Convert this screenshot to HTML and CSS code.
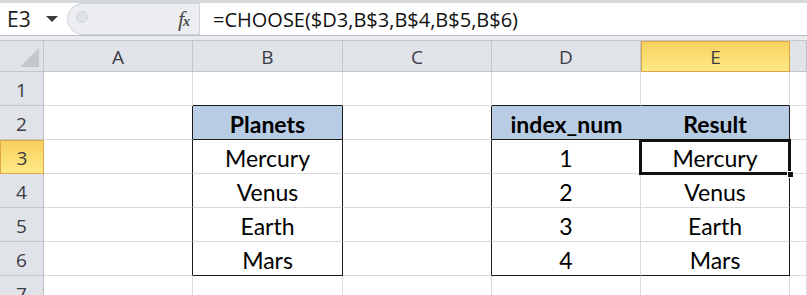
FILE: index.html
```html
<!DOCTYPE html>
<html>
<head>
<meta charset="utf-8">
<link rel="stylesheet" href="styles.css">
</head>
<body>
<div class="fbar">
  <div class="fbar-row">
    <div class="namebox"><span>E3</span><span class="dd"></span></div>
    <div class="splitter">
      <span class="knob"></span>
      <span class="fx"><i>f</i><i class="x">x</i></span>
    </div>
    <div class="formula">=CHOOSE($D3,B$3,B$4,B$5,B$6)</div>
  </div>
</div>
<div class="sheet">
  <div class="ch corner"><span class="tri"></span></div>
  <div class="ch">A</div>
  <div class="ch">B</div>
  <div class="ch">C</div>
  <div class="ch">D</div>
  <div class="ch sel">E</div>
  <div class="ch"></div>

  <div class="rh">1</div>
  <div class="c"></div>
  <div class="c kb"></div>
  <div class="c"></div>
  <div class="c kb"></div>
  <div class="c kb"></div>
  <div class="c"></div>

  <div class="rh">2</div>
  <div class="c kr"></div>
  <div class="c hd kr kb">Planets</div>
  <div class="c kr"></div>
  <div class="c hd kb nr">index_num</div>
  <div class="c hd kr kb">Result</div>
  <div class="c"></div>

  <div class="rh rsel">3</div>
  <div class="c kr"></div>
  <div class="c kr">Mercury</div>
  <div class="c kr"></div>
  <div class="c">1</div>
  <div class="c kr active">Mercury</div>
  <div class="c"></div>

  <div class="rh">4</div>
  <div class="c kr"></div>
  <div class="c kr">Venus</div>
  <div class="c kr"></div>
  <div class="c">2</div>
  <div class="c kr">Venus</div>
  <div class="c"></div>

  <div class="rh">5</div>
  <div class="c kr"></div>
  <div class="c kr">Earth</div>
  <div class="c kr"></div>
  <div class="c">3</div>
  <div class="c kr">Earth</div>
  <div class="c"></div>

  <div class="rh">6</div>
  <div class="c kr"></div>
  <div class="c kr kb">Mars</div>
  <div class="c kr"></div>
  <div class="c kb">4</div>
  <div class="c kr kb">Mars</div>
  <div class="c"></div>

  <div class="rh">7</div>
  <div class="c"></div>
  <div class="c"></div>
  <div class="c"></div>
  <div class="c"></div>
  <div class="c"></div>
  <div class="c"></div>
</div>
</body>
</html>
```
FILE: styles.css
```css
html, body {
  margin: 0;
  padding: 0;
  background: #ffffff;
  overflow: hidden;
}
body {
  width: 807px;
  height: 295px;
  font-family: "Lato", "Liberation Sans", sans-serif;
}

/* formula bar */
.fbar {
  height: 41px;
  box-sizing: border-box;
  background: #e9ebee;
  border-top: 3px solid #d5d8dc;
  border-bottom: 1px solid #c3c6ca;
}
.fbar-row {
  display: flex;
  height: 32px;
  border-bottom: 1px solid #b9bcc0;
  background: #ffffff;
}
.namebox {
  width: 67px;
  box-sizing: border-box;
  display: flex;
  align-items: center;
  padding-left: 7px;
  font-family: "Open Sans", "Liberation Sans", sans-serif;
  font-size: 21px;
  color: #1e1e1e;
}
.dd {
  width: 0;
  height: 0;
  margin-left: 15px;
  border-left: 6px solid transparent;
  border-right: 6px solid transparent;
  border-top: 6px solid #3a3a3a;
}
.splitter {
  width: 133px;
  box-sizing: border-box;
  background: #eceef1;
  border: 1px solid #cfd2d6;
  border-radius: 16px 0 0 16px;
  display: flex;
  align-items: center;
  justify-content: space-between;
  padding: 0 10px 0 8px;
}
.knob {
  width: 10px;
  height: 10px;
  border-radius: 50%;
  background: #dfe2e6;
  border: 1px solid #d2d5d9;
  margin-bottom: 4px;
}
.fx {
  font-family: "Liberation Serif", serif;
  font-size: 22px;
  color: #4a4a4a;
  letter-spacing: -1px;
}
.fx i { font-style: italic; }
.fx .x { font-size: 14px; font-weight: bold; }
.formula {
  flex: 1;
  display: flex;
  align-items: center;
  padding-left: 13px;
  font-family: "Open Sans", "Liberation Sans", sans-serif;
  font-size: 20px;
  color: #111;
}

/* sheet grid */
.sheet {
  display: grid;
  grid-template-columns: 44px 149px 150px 149px 149px 149px 17px;
  grid-template-rows: 31px repeat(7, 34px);
}
.ch, .rh {
  box-sizing: border-box;
  background: #e0e3e8;
  border-right: 1px solid #c2c6cc;
  border-bottom: 1px solid #c2c6cc;
  display: flex;
  align-items: center;
  justify-content: center;
  font-family: "Open Sans", "Liberation Sans", sans-serif;
  font-size: 19px;
  color: #3b3b45;
}
.ch { padding-top: 1px; }
.rh { border-right: 1px solid #b8bdc4; padding-top: 2px; }
.corner {
  justify-content: flex-end;
  align-items: flex-end;
  padding: 0 4px 4px 0;
}
.tri {
  width: 0;
  height: 0;
  border-left: 19px solid transparent;
  border-bottom: 19px solid #c4c8cd;
}
.ch.sel, .rh.rsel {
  background: linear-gradient(#f8d15f, #ffe986);
  border: 1px solid #dfa746;
}
.c {
  box-sizing: border-box;
  border-right: 1px solid #dadada;
  border-bottom: 1px solid #dadada;
  display: flex;
  align-items: center;
  justify-content: center;
  font-size: 23px;
  color: #000;
  padding-top: 3px;
}
.c.kr { border-right: 1px solid #1a1a1a; }
.c.kb { border-bottom: 1px solid #1a1a1a; }
.c.nr { border-right: none; }
.c.hd {
  background: #b8cce4;
  font-weight: bold;
}
.c.active { position: relative; }
.c.active::after {
  content: "";
  position: absolute;
  left: -2px;
  top: -1px;
  right: -2px;
  bottom: -2px;
  border: 3px solid #111;
}
.c.active::before {
  content: "";
  position: absolute;
  right: -5px;
  bottom: -5px;
  width: 5px;
  height: 5px;
  background: #111;
  border: 1px solid #fff;
  z-index: 2;
}
```
